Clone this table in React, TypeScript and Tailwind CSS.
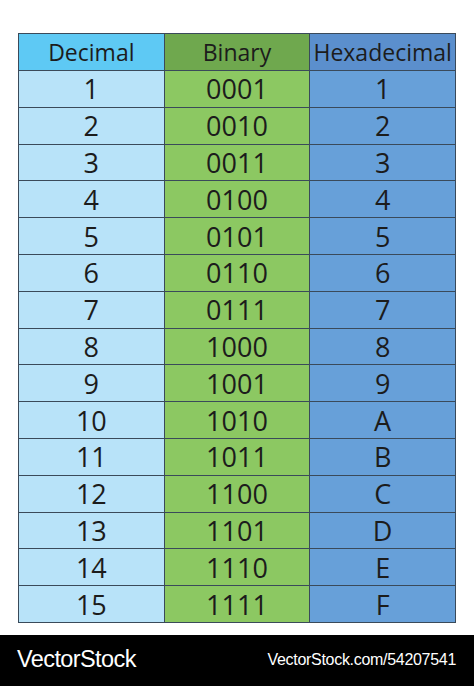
import React from "react";

const rows = Array.from({ length: 15 }, (_, i) => {
  const n = i + 1;
  return {
    dec: String(n),
    bin: n.toString(2).padStart(4, "0"),
    hex: n.toString(16).toUpperCase(),
  };
});

const App = () => {
  return (
    <div
      className="w-[474px] h-[686px] bg-white flex flex-col"
      style={{ fontFamily: '"Open Sans", "Noto Sans", sans-serif' }}
    >
      <div className="pt-[33px] pl-[18px]">
        <table className="w-[438px] border-collapse table-fixed text-[#1c1c1c]">
          <thead>
            <tr className="h-[37px] text-[23px] leading-none">
              <th className="font-normal bg-[#5ec9f4] border border-[#3a4a5a]">Decimal</th>
              <th className="font-normal bg-[#6fa84e] border border-[#3a4a5a]">Binary</th>
              <th className="font-normal bg-[#5b8fcd] border border-[#3a4a5a]">Hexadecimal</th>
            </tr>
          </thead>
          <tbody className="text-[27px] leading-none">
            {rows.map((r) => (
              <tr key={r.dec} className="h-[36.8px]">
                <td className="text-center bg-[#b8e3f9] border border-[#3a4a5a]">{r.dec}</td>
                <td className="text-center bg-[#8cc862] border border-[#3a4a5a]">{r.bin}</td>
                <td className="text-center bg-[#67a0d9] border border-[#3a4a5a]">{r.hex}</td>
              </tr>
            ))}
          </tbody>
        </table>
      </div>
      <div
        className="mt-auto h-[51px] bg-black text-white flex items-center justify-between pl-[17px] pr-[18px] pb-[2px]"
        style={{ fontFamily: '"Liberation Sans", Arial, sans-serif' }}
      >
        <span className="text-[23.5px] tracking-[-0.6px]">VectorStock</span>
        <span className="text-[16px] tracking-[-0.3px]">VectorStock.com/54207541</span>
      </div>
    </div>
  );
};

export default App;
